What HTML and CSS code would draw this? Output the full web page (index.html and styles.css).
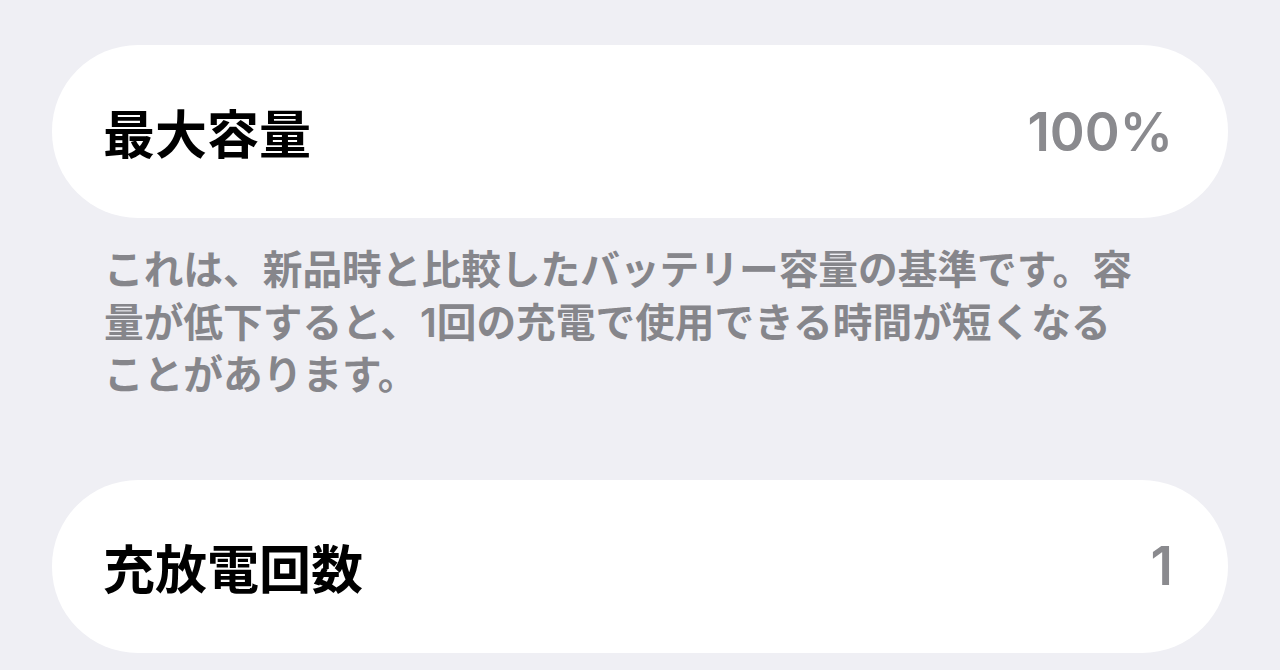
FILE: index.html
```html
<!DOCTYPE html>
<html lang="ja">
	<head>
		<meta charset="UTF-8">
		<title>バッテリーの状態</title>
		<link rel="stylesheet" href="styles.css">
	</head>
	<body>
		<main class="page">
			<section class="group">
				<div class="cell">
					<span class="label">最大容量</span>
					<span class="value">100%</span>
				</div>
				<p class="footer">これは、新品時と比較したバッテリー容量の基準です。容量が低下すると、1回の充電で使用できる時間が短くなることがあります。</p>
			</section>
			<section class="group">
				<div class="cell">
					<span class="label">充放電回数</span>
					<span class="value">1</span>
				</div>
			</section>
		</main>
	</body>
</html>
```

FILE: styles.css
```css
html,body{
	margin:0;
	padding:0;
	background:#efeff4;
}
body{
	font-family:"Inter","Noto Sans CJK JP",sans-serif;
	-webkit-font-smoothing:antialiased;
}
.page{
	display:flex;
	flex-direction:column;
	gap:78px;
	padding:45px 52px 0;
}
.group{
	display:flex;
	flex-direction:column;
}
/* 白い角丸の行 */
.cell{
	display:flex;
	align-items:center;
	justify-content:space-between;
	height:173px;
	padding:0 55px 0 51px;
	background:#fff;
	border-radius:86px;
}
.label{
	font-size:52px;
	font-weight:700;
	color:#000;
}
.value{
	font-size:53px;
	font-weight:600;
	color:#8a8a8e;
}
/* 行の下の説明文 */
.footer{
	margin:26px 0 0;
	padding:0 78px 0 52px;
	font-size:39.7px;
	line-height:52.5px;
	font-weight:600;
	color:#86868b;
}
```
